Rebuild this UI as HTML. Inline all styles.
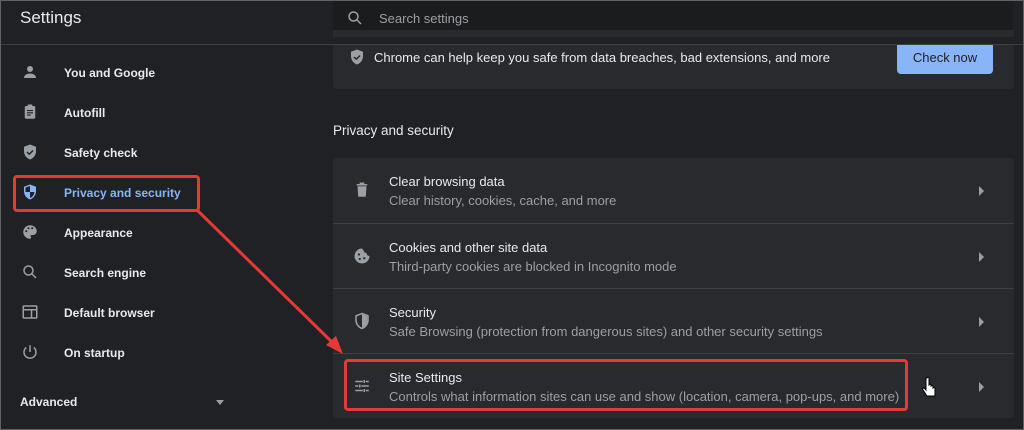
<!DOCTYPE html>
<html><head><style>
*{margin:0;padding:0;box-sizing:border-box}
body{width:1024px;height:430px;background:#202124;font-family:"Liberation Sans",sans-serif;position:relative;overflow:hidden}
.frame{position:absolute;left:0;top:0;width:1024px;height:430px;border:1px solid #5f6368;pointer-events:none}
.hdr{position:absolute;left:0;top:0;width:1024px;height:45px;border-bottom:1px solid #3c4043;background:#202124}
.title{position:absolute;left:20px;top:8px;color:#e8eaed;font-size:17px}
.search{position:absolute;left:333px;top:0;width:680px;height:37px;background:#1b1c1e}
.search span{position:absolute;left:46px;top:11px;color:#9aa0a6;font-size:13px}
.nav{position:absolute;left:0;color:#e8eaed;font-size:12px;font-weight:bold}
.nav .ic{position:absolute;left:21px;top:-1px;width:18px;height:18px}
.nav .t{position:absolute;left:64px;top:2px;white-space:nowrap}
.card{position:absolute;left:333px;width:681px;background:#292a2d;border-radius:4px}
.row{position:absolute;left:0;width:681px;height:65px;border-top:1px solid #3c4043}
.row .h{position:absolute;left:56px;top:16px;color:#e8eaed;font-size:13px}
.row .s{position:absolute;left:56px;top:35px;color:#9aa0a6;font-size:13px;white-space:nowrap}
.row .ic{position:absolute;left:20px;top:22px}
.row .ar{position:absolute;right:30px;top:28px;width:0;height:0;border-left:5px solid #9aa0a6;border-top:5px solid transparent;border-bottom:5px solid transparent}
.red{position:absolute;border:3px solid #e53935;border-radius:4px}
</style></head><body>
<div class="hdr"><div class="title">Settings</div></div>
<div class="search"><svg style="position:absolute;left:13px;top:9px" width="18" height="18" viewBox="0 0 24 24"><circle cx="10" cy="10" r="6" fill="none" stroke="#9aa0a6" stroke-width="2"/><path d="M14.5 14.5L20 20" stroke="#9aa0a6" stroke-width="2"/></svg><span>Search settings</span></div>

<div class="nav" style="top:64px"><svg class="ic" viewBox="0 0 24 24"><circle cx="12" cy="8" r="4" fill="#9aa0a6"/><path d="M4 20c0-4 4-6 8-6s8 2 8 6z" fill="#9aa0a6"/></svg><span class="t">You and Google</span></div>
<div class="nav" style="top:104px"><svg class="ic" viewBox="0 0 24 24"><rect x="5" y="4" width="14" height="17" rx="2" fill="#9aa0a6"/><rect x="9" y="2" width="6" height="4" fill="#9aa0a6"/><path d="M8 10h8M8 13h8M8 16h5" stroke="#202124" stroke-width="1.5"/></svg><span class="t">Autofill</span></div>
<div class="nav" style="top:144px"><svg class="ic" viewBox="0 0 24 24"><path d="M12 2l8 3v6c0 5-3.5 9.5-8 11-4.5-1.5-8-6-8-11V5z" fill="#9aa0a6"/><path d="M8 12l3 3 5-5" stroke="#202124" stroke-width="2" fill="none"/></svg><span class="t">Safety check</span></div>
<div class="nav" style="top:184px;color:#8ab4f8"><svg class="ic" viewBox="0 0 24 24"><path d="M12 2l8 3v6c0 5-3.5 9.5-8 11-4.5-1.5-8-6-8-11V5z" fill="#8ab4f8"/><path d="M12 4v8H6V6z M12 12h6c-.5 4-3 7-6 8z" fill="#202124"/></svg><span class="t">Privacy and security</span></div>
<div class="nav" style="top:224px"><svg class="ic" viewBox="0 0 24 24"><path d="M12 3a9 9 0 000 18c1 0 1.5-.7 1.5-1.5 0-1-.8-1.3-.8-2.2 0-.8.7-1.3 1.5-1.3H16a5 5 0 005-5c0-4.4-4-8-9-8z" fill="#9aa0a6"/><circle cx="7" cy="11" r="1.4" fill="#202124"/><circle cx="10" cy="7" r="1.4" fill="#202124"/><circle cx="15" cy="7" r="1.4" fill="#202124"/></svg><span class="t">Appearance</span></div>
<div class="nav" style="top:264px"><svg class="ic" viewBox="0 0 24 24"><circle cx="10" cy="10" r="6" fill="none" stroke="#9aa0a6" stroke-width="2"/><path d="M14.5 14.5L20 20" stroke="#9aa0a6" stroke-width="2"/></svg><span class="t">Search engine</span></div>
<div class="nav" style="top:304px"><svg class="ic" viewBox="0 0 24 24"><rect x="3" y="4" width="18" height="16" rx="1" fill="none" stroke="#9aa0a6" stroke-width="2"/><path d="M3 9h18M14 9v11" stroke="#9aa0a6" stroke-width="2"/></svg><span class="t">Default browser</span></div>
<div class="nav" style="top:344px"><svg class="ic" viewBox="0 0 24 24"><path d="M12 3v9" stroke="#9aa0a6" stroke-width="2"/><path d="M7 6a8 8 0 1010 0" fill="none" stroke="#9aa0a6" stroke-width="2"/></svg><span class="t">On startup</span></div>
<div class="nav" style="top:393px"><span class="t" style="left:20px">Advanced</span></div>
<div style="position:absolute;left:216px;top:400px;border-top:5px solid #9aa0a6;border-left:4px solid transparent;border-right:4px solid transparent"></div>

<div class="card" style="top:30px;height:59px;border-radius:0 0 4px 4px">
<svg style="position:absolute;left:15px;top:17px" width="18" height="20" viewBox="0 0 24 24"><path d="M12 2l8 3v6c0 5-3.5 9.5-8 11-4.5-1.5-8-6-8-11V5z" fill="#9aa0a6"/><path d="M8 12l3 3 5-5" stroke="#292a2d" stroke-width="2" fill="none"/></svg>
<span style="position:absolute;left:41px;top:20px;color:#e8eaed;font-size:13px">Chrome can help keep you safe from data breaches, bad extensions, and more</span>
<div style="position:absolute;left:564px;top:12px;width:96px;height:32px;background:#8ab4f8;border-radius:4px;color:#202124;font-size:13px;text-align:center;line-height:31px">Check now</div>
</div>
<div class="hdr" style="left:333px;width:691px;top:37px;height:8px;background:#202124;border-bottom:1px solid #3c4043"></div>

<div style="position:absolute;left:333px;top:123px;color:#e8eaed;font-size:13.5px">Privacy and security</div>
<div class="card" style="top:158px;height:260px">
<div class="row" style="top:0;border-top:none"><svg class="ic" width="18" height="20" viewBox="0 0 24 24"><path d="M6 7h12l-1 14H7z M5 4h14v2H5z M9 2h6v2H9z" fill="#9aa0a6"/></svg><div class="h">Clear browsing data</div><div class="s">Clear history, cookies, cache, and more</div><div class="ar"></div></div>
<div class="row" style="top:65px"><svg class="ic" width="18" height="20" viewBox="0 0 24 24"><path d="M12 2a10 10 0 1010 10 4 4 0 01-4-4 4 4 0 01-4-4 3 3 0 01-2-2z" fill="#9aa0a6"/><circle cx="8" cy="10" r="1.5" fill="#292a2d"/><circle cx="9" cy="16" r="1.5" fill="#292a2d"/><circle cx="15" cy="15" r="1.5" fill="#292a2d"/></svg><div class="h">Cookies and other site data</div><div class="s">Third-party cookies are blocked in Incognito mode</div><div class="ar"></div></div>
<div class="row" style="top:130px"><svg class="ic" width="18" height="20" viewBox="0 0 24 24"><path d="M12 2l8 3v6c0 5-3.5 9.5-8 11-4.5-1.5-8-6-8-11V5z" fill="none" stroke="#9aa0a6" stroke-width="2"/><path d="M12 3v18c3.5-1.5 7-5 7-10V6z" fill="#9aa0a6"/></svg><div class="h">Security</div><div class="s">Safe Browsing (protection from dangerous sites) and other security settings</div><div class="ar"></div></div>
<div class="row" style="top:195px"><svg class="ic" width="18" height="20" viewBox="0 0 24 24"><path d="M3 6h10M17 6h4M3 12h4M11 12h10M3 18h10M17 18h4M15 4v4M9 10v4M15 16v4" stroke="#9aa0a6" stroke-width="2"/></svg><div class="h">Site Settings</div><div class="s">Controls what information sites can use and show (location, camera, pop-ups, and more)</div><div class="ar"></div></div>
</div>

<div class="red" style="left:13px;top:175px;width:187px;height:37px"></div>
<div class="red" style="left:344px;top:359px;width:564px;height:52px"></div>
<svg style="position:absolute;left:0;top:0" width="1024" height="430"><path d="M197 210L336 346" stroke="#e53935" stroke-width="3"/><path d="M343 354L326 345L336 336z" fill="#e53935"/>
<path d="M926 378v12l-2-2c-1 0-2 1-1 2l4 6h8v-7c0-1-1-2-2-1v-1c0-1-1-2-2-1v-1c0-1-1-1-2 0v-7c0-1-2-1-2 0z" fill="#fff" stroke="#000" stroke-width="1"/></svg>
<div class="frame"></div>
</body></html>
